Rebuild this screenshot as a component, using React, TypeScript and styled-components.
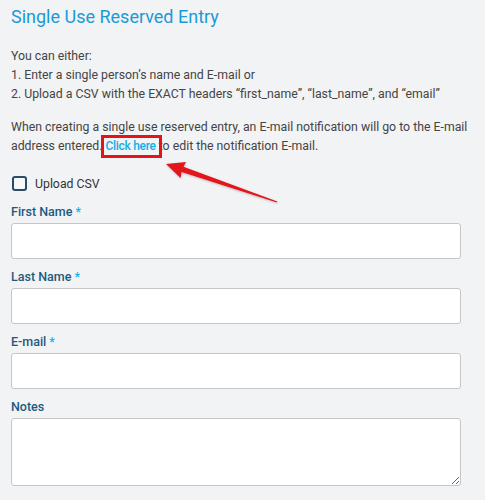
import React from "react";
import styled, { createGlobalStyle } from "styled-components";

const Global = createGlobalStyle`
  html, body { margin: 0; padding: 0; background: #f2f3f5; }
  body { font-family: Roboto, "Liberation Sans", Arial, sans-serif; }
  * { box-sizing: border-box; }
`;

const Page = styled.div`
  position: relative;
  width: 485px;
  min-height: 500px;
  padding: 5px 8px 0 11px;
`;

const Title = styled.h1`
  margin: 0;
  font-size: 18px;
  font-weight: 400;
  line-height: 24px;
  color: #1b9ad8;
`;

const Text = styled.p<{ $top?: number }>`
  margin: ${(p) => p.$top ?? 0}px 0 0;
  font-size: 12.3px;
  line-height: 18.8px;
  color: #444;
`;

const Highlight = styled.a`
  position: relative;
  color: #12aee8;
  font-size: 12px;
  font-weight: 500;
  letter-spacing: -0.3px;
  text-decoration: none;
  &::after {
    content: "";
    position: absolute;
    left: -5px;
    right: -6px;
    top: -4px;
    bottom: -5px;
    border: 3px solid #e3141c;
  }
`;

const CheckRow = styled.label`
  display: flex;
  align-items: center;
  gap: 8px;
  margin: 20px 0 0 1px;
  font-size: 12.3px;
  color: #333;
  line-height: 16px;
`;

const Check = styled.input`
  appearance: none;
  margin: 0;
  width: 15px;
  height: 15px;
  border: 2px solid #2b4c69;
  border-radius: 3px;
  background: #f7f8fa;
`;

const Field = styled.div<{ $top: number }>`
  display: flex;
  flex-direction: column;
  margin-top: ${(p) => p.$top}px;
`;

const Label = styled.label`
  font-size: 12.5px;
  font-weight: 500;
  line-height: 16px;
  color: #1e5a7e;
  margin-bottom: 3px;
`;

const Star = styled.span`
  color: #19b0ea;
  margin-left: 3px;
`;

const Input = styled.input`
  width: 450px;
  height: 36px;
  border: 1px solid #c6c6c6;
  border-radius: 3px;
  background: #fff;
  font: inherit;
`;

const Area = styled.textarea`
  width: 450px;
  height: 68px;
  border: 1px solid #c6c6c6;
  border-radius: 3px;
  background: #fff;
  font: inherit;
  margin: 0;
  display: block;
`;

const Overlay = styled.svg`
  position: absolute;
  left: 0;
  top: 0;
  pointer-events: none;
`;

export default function App() {
  return (
    <>
      <Global />
      <Page>
        <Title>Single Use Reserved Entry</Title>
        <Text $top={18}>
          You can either:
          <br />
          1. Enter a single person’s name and E-mail or
          <br />
          2. Upload a CSV with the EXACT headers “first_name”, “last_name”, and “email”
        </Text>
        <Text $top={15}>
          When creating a single use reserved entry, an E-mail notification will go to the E-mail
          <br />
          address entered. <Highlight href="#">Click here</Highlight> to edit the notification
          E-mail.
        </Text>
        <CheckRow>
          <Check type="checkbox" />
          Upload CSV
        </CheckRow>
        <Field $top={12}>
          <Label>
            First Name<Star>*</Star>
          </Label>
          <Input />
        </Field>
        <Field $top={10}>
          <Label>
            Last Name<Star>*</Star>
          </Label>
          <Input />
        </Field>
        <Field $top={10}>
          <Label>
            E-mail<Star>*</Star>
          </Label>
          <Input />
        </Field>
        <Field $top={10}>
          <Label>Notes</Label>
          <Area />
        </Field>
        <Overlay width="485" height="500" viewBox="0 0 485 500">
          <defs>
            <filter id="sh" x="-10%" y="-10%" width="120%" height="130%">
              <feDropShadow dx="0.5" dy="1" stdDeviation="0.8" floodColor="#000" floodOpacity="0.25" />
            </filter>
          </defs>
          <polygon
            filter="url(#sh)"
            fill="#e3141c"
            points="166,164 186,162 183.5,166.8 277.3,201.4 276.8,202.6 181.6,171.9 180.5,178"
          />
        </Overlay>
      </Page>
    </>
  );
}
